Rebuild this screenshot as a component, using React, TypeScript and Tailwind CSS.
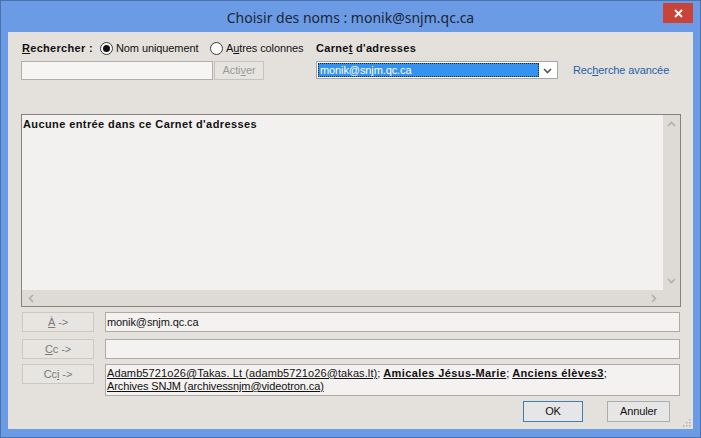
import React from "react"

function Radio({ checked }: { checked?: boolean }) {
  return (
    <span className="w-[13px] h-[13px] rounded-full border border-[#3c3c3c] bg-[#fafafa] flex items-center justify-center shrink-0">
      {checked && <span className="w-[7px] h-[7px] rounded-full bg-[#111]" />}
    </span>
  )
}

function Chevron({ dir, className }: { dir: "up" | "down" | "left" | "right"; className?: string }) {
  const d = {
    up: "M1 6 L4.5 2.5 L8 6",
    down: "M1 3 L4.5 6.5 L8 3",
    left: "M6 1 L2.5 4.5 L6 8",
    right: "M3 1 L6.5 4.5 L3 8",
  }[dir]
  return (
    <svg width="9" height="9" viewBox="0 0 9 9" className={className}>
      <path d={d} fill="none" stroke="currentColor" strokeWidth="1.6" />
    </svg>
  )
}

function SideButton({ children }: { children: React.ReactNode }) {
  return (
    <div className="w-[72px] h-[20px] shrink-0 border border-[#cbc8c4] bg-[#e7e5e2] text-[#7a7a7a] flex items-center justify-center">
      <span>{children}</span>
    </div>
  )
}

export default function App() {
  return (
    <div className="w-[701px] h-[438px] bg-[#6b9be4] border border-[#4c72ad] flex flex-col overflow-hidden font-[family-name:'Liberation_Sans',Arial,sans-serif] text-[11px] tracking-[-0.1px] text-[#111] leading-[13px]">
      {/* Barre de titre */}
      <div className="h-[31px] shrink-0 relative flex items-center justify-center">
        <span className="text-[14px] leading-[20px] tracking-[0px] text-[#1c2634] font-[family-name:'Noto_Sans',sans-serif] mt-[2px]">
          Choisir des noms : monik@snjm.qc.ca
        </span>
        <div className="absolute right-[7px] top-[2px] w-[30px] h-[20px] bg-[#c8443b] flex items-center justify-center">
          <svg width="9" height="9" viewBox="0 0 9 9">
            <path d="M1 1 L8 8 M8 1 L1 8" stroke="#fff" strokeWidth="1.8" />
          </svg>
        </div>
      </div>

      {/* Zone client */}
      <div className="flex-1 mx-[7px] mb-[8px] bg-[#e4e1dd] flex flex-col pl-[13px] pr-[12px] pt-[9px] relative">
        {/* Recherche */}
        <div className="flex">
          <div className="w-[295px] flex flex-col">
            <div className="h-[14px] flex items-center">
              <span className="w-[78px] ml-[1px] font-bold tracking-[0.3px]">
                <u>R</u>echercher :
              </span>
              <div className="w-[110px] flex items-center gap-[3px]">
                <Radio checked />
                <span>Nom uniquement</span>
              </div>
              <div className="flex items-center gap-[3px]">
                <Radio />
                <span>
                  A<u>u</u>tres colonnes
                </span>
              </div>
            </div>
            <div className="mt-[6px] flex gap-[1px]">
              <div className="w-[192px] h-[19px] border border-[#b1afab] bg-[#f6f5f3]" />
              <div className="w-[50px] h-[19px] border border-[#c6c3bf] bg-[#e6e4e1] text-[#9a9a9a] flex items-center justify-center">
                <span>
                  Acti<u>v</u>er
                </span>
              </div>
            </div>
          </div>
          <div className="flex flex-col">
            <div className="h-[14px] flex items-center font-bold tracking-[0.3px]">
              <span>
                Carne<u>t</u> d'adresses
              </span>
            </div>
            <div className="mt-[6px] flex items-center">
              <div className="w-[242px] h-[18px] border border-[#a7a5a2] bg-white flex items-center p-[1px]">
                <div className="w-[221px] h-full bg-[#3493f0] border border-dotted border-[#222] text-white flex items-center pl-[1px]">
                  monik@snjm.qc.ca
                </div>
                <div className="flex-1 flex items-center justify-center text-[#555]">
                  <Chevron dir="down" />
                </div>
              </div>
              <span className="ml-[15px] text-[#1e5fa8]">
                Rec<u>h</u>erche avancée
              </span>
            </div>
          </div>
        </div>

        {/* Liste */}
        <div className="mt-[34px] h-[193px] border border-[#85837f] flex flex-col">
          <div className="flex-1 flex">
            <div className="flex-1 bg-[#f3f1ef] pl-[1px] pt-[3px] font-bold tracking-[0.4px]">
              Aucune entrée dans ce Carnet d'adresses
            </div>
            <div className="w-[17px] bg-[#dedbd7] flex flex-col items-center justify-between py-[5px] text-[#b0aeab]">
              <Chevron dir="up" />
              <Chevron dir="down" />
            </div>
          </div>
          <div className="h-[16px] flex">
            <div className="flex-1 bg-[#dedbd7] flex items-center justify-between px-[5px] text-[#b0aeab]">
              <Chevron dir="left" />
              <Chevron dir="right" />
            </div>
            <div className="w-[17px] bg-[#dedbd7]" />
          </div>
        </div>

        {/* Destinataires */}
        <div className="mt-[5px] flex gap-[11px] ml-[1px] mr-[1px]">
          <SideButton>
            <u>À</u> -&gt;
          </SideButton>
          <div className="flex-1 h-[20px] border border-[#aeaba7] bg-[#f4f2f0] flex items-center pl-[1px]">
            monik@snjm.qc.ca
          </div>
        </div>
        <div className="mt-[7px] flex gap-[11px] ml-[1px] mr-[1px]">
          <SideButton>
            <u>C</u>c -&gt;
          </SideButton>
          <div className="flex-1 h-[20px] border border-[#aeaba7] bg-[#f4f2f0]" />
        </div>
        <div className="mt-[5px] flex gap-[11px] ml-[1px] mr-[1px]">
          <SideButton>
            Cc<u>i</u> -&gt;
          </SideButton>
          <div className="flex-1 h-[32px] border border-[#aeaba7] bg-[#f4f2f0] pl-[1px] pt-[2px]">
            <div>
              <u className="tracking-[0.1px]">Adamb5721o26@Takas. Lt (adamb5721o26@takas.lt)</u>;{" "}
              <u className="font-bold tracking-[0.4px]">Amicales Jésus-Marie</u>;{" "}
              <u className="font-bold tracking-[0.4px]">Anciens élèves3</u>;
            </div>
            <div>
              <u>Archives SNJM (archivessnjm@videotron.ca)</u>
            </div>
          </div>
        </div>

        {/* Boutons */}
        <div className="mt-[5px] flex justify-end gap-[24px] mr-[11px]">
          <div className="w-[60px] h-[21px] border border-[#3c7fb1] bg-[#e6e6e6] flex items-center justify-center">
            OK
          </div>
          <div className="w-[63px] h-[21px] border border-[#adadad] bg-[#e6e6e6] flex items-center justify-center">
            Annuler
          </div>
        </div>

        {/* Poignée */}
        <svg width="9" height="9" viewBox="0 0 9 9" className="absolute right-[2px] bottom-[2px]">
          <g fill="#b3b0ac">
            <rect x="7" y="1" width="1.5" height="1.5" />
            <rect x="4" y="4" width="1.5" height="1.5" />
            <rect x="7" y="4" width="1.5" height="1.5" />
            <rect x="1" y="7" width="1.5" height="1.5" />
            <rect x="4" y="7" width="1.5" height="1.5" />
            <rect x="7" y="7" width="1.5" height="1.5" />
          </g>
        </svg>
      </div>
    </div>
  )
}
